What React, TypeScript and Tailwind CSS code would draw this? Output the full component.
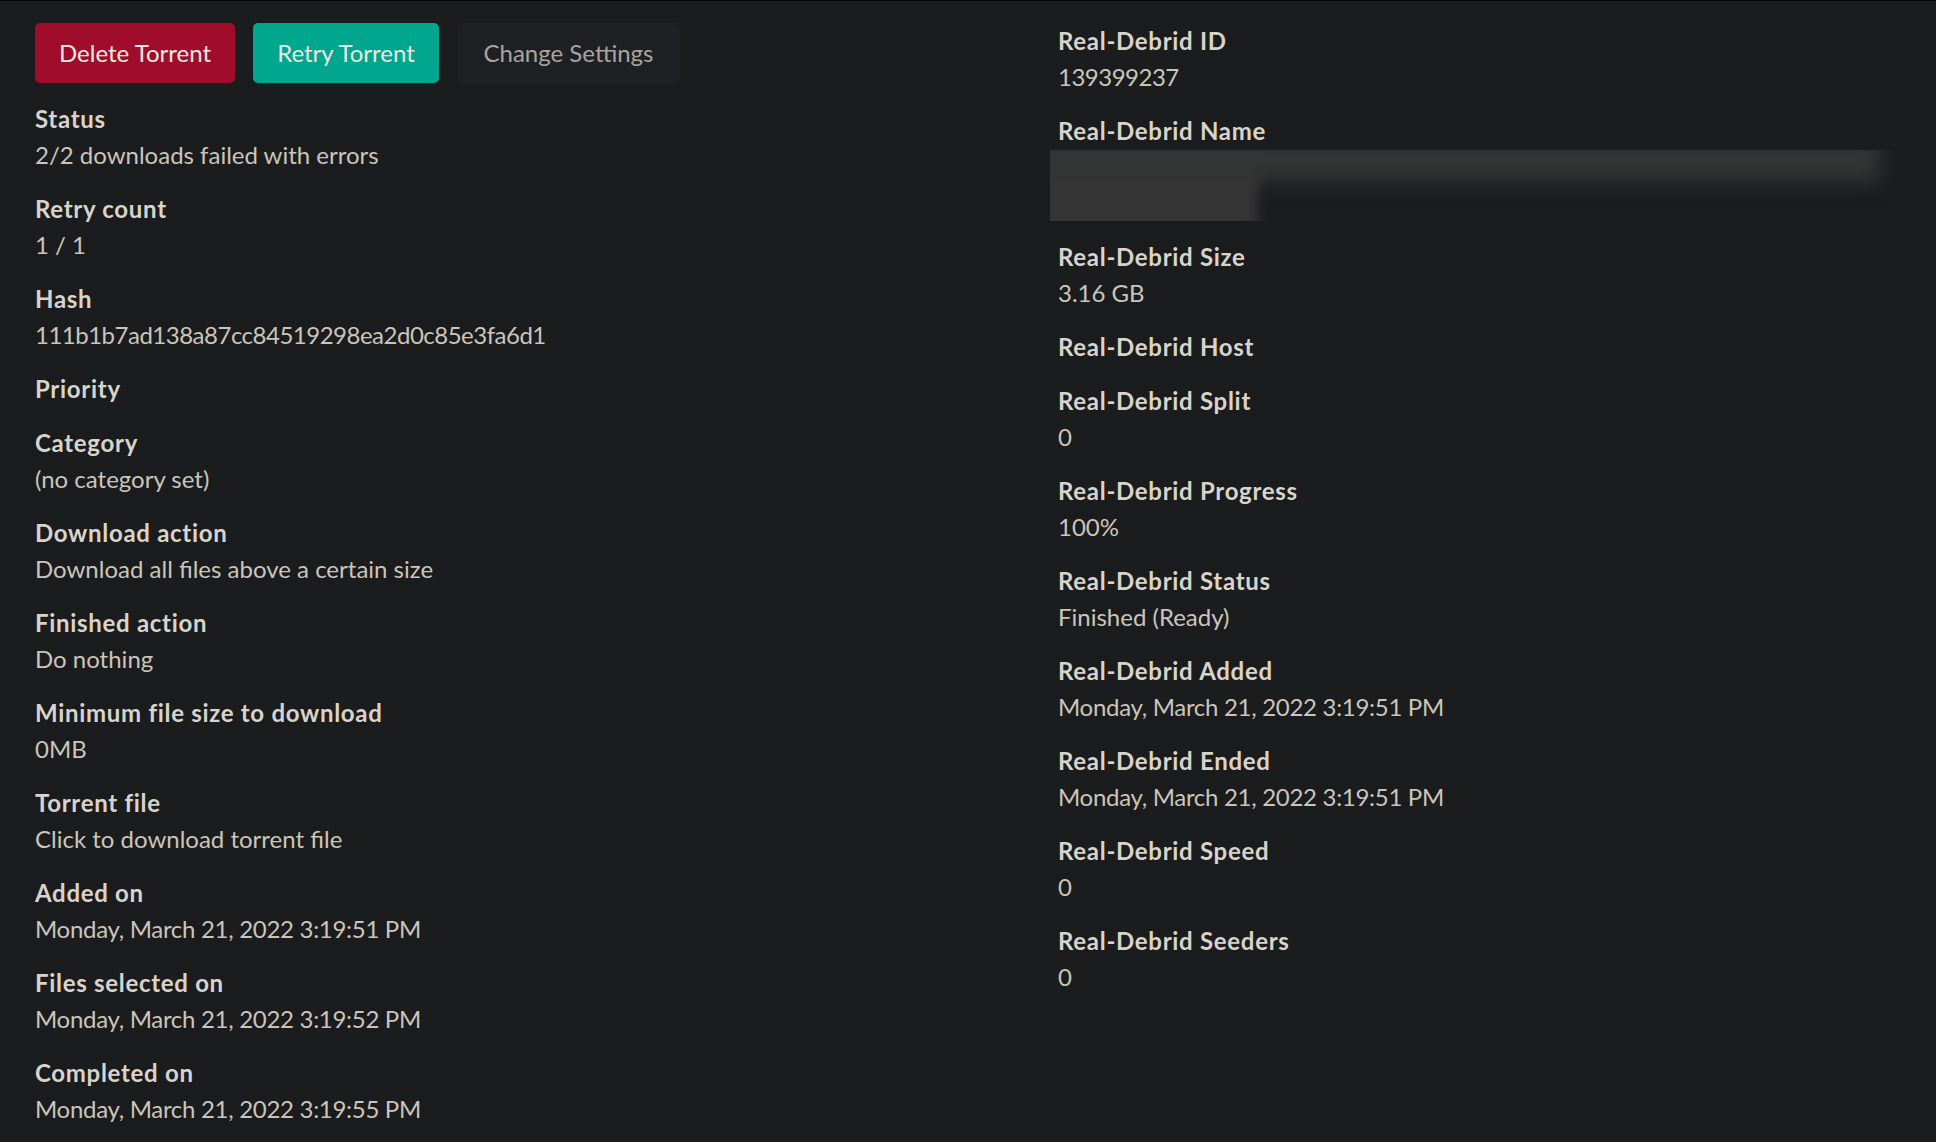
import React from "react";

type Field = { label: string; value?: string; tight?: string };

const left: Field[] = [
  { label: "Status", value: "2/2 downloads failed with errors" },
  { label: "Retry count", value: "1 / 1" },
  { label: "Hash", value: "111b1b7ad138a87cc84519298ea2d0c85e3fa6d1", tight: "tracking-[-0.5px]" },
  { label: "Priority" },
  { label: "Category", value: "(no category set)" },
  { label: "Download action", value: "Download all files above a certain size" },
  { label: "Finished action", value: "Do nothing" },
  { label: "Minimum file size to download", value: "0MB" },
  { label: "Torrent file", value: "Click to download torrent file" },
  { label: "Added on", value: "Monday, March 21, 2022 3:19:51 PM", tight: "tracking-[-0.3px]" },
  { label: "Files selected on", value: "Monday, March 21, 2022 3:19:52 PM", tight: "tracking-[-0.3px]" },
  { label: "Completed on", value: "Monday, March 21, 2022 3:19:55 PM", tight: "tracking-[-0.3px]" },
];

const rightRest: Field[] = [
  { label: "Real-Debrid Size", value: "3.16 GB" },
  { label: "Real-Debrid Host" },
  { label: "Real-Debrid Split", value: "0" },
  { label: "Real-Debrid Progress", value: "100%" },
  { label: "Real-Debrid Status", value: "Finished (Ready)" },
  { label: "Real-Debrid Added", value: "Monday, March 21, 2022 3:19:51 PM", tight: "tracking-[-0.3px]" },
  { label: "Real-Debrid Ended", value: "Monday, March 21, 2022 3:19:51 PM", tight: "tracking-[-0.3px]" },
  { label: "Real-Debrid Speed", value: "0" },
  { label: "Real-Debrid Seeders", value: "0" },
];

function FieldView({ f }: { f: Field }) {
  return (
    <div>
      <div className="font-bold tracking-[0.7px] text-[#d9d4cb]">{f.label}</div>
      {f.value !== undefined && (
        <div className={"text-[#cbc5bb] " + (f.tight ?? "")}>{f.value}</div>
      )}
    </div>
  );
}

export default function App() {
  return (
    <div
      className="min-h-screen bg-[#1b1c1e] border-t border-[#050505] text-[24px] leading-[36px]"
      style={{ fontFamily: "Lato, 'Open Sans', sans-serif" }}
    >
      <div className="flex pt-[22px]">
        <div className="w-[1058px] shrink-0 pl-[35px] flex flex-col gap-[18px] pb-[16px]">
          <div className="flex gap-[18px] h-[60px]">
            <button className="w-[200px] h-[60px] rounded-[5px] bg-[#a00d2b] text-[#ece8e2] flex items-center justify-center">
              Delete Torrent
            </button>
            <button className="w-[186px] h-[60px] rounded-[5px] bg-[#00a68d] text-[#ece8e2] flex items-center justify-center">
              Retry Torrent
            </button>
            <button className="w-[223px] h-[60px] rounded-[5px] bg-[#1f2023] text-[#aaa59e] flex items-center justify-center">
              Change Settings
            </button>
          </div>
          {left.map((f) => (
            <FieldView key={f.label} f={f} />
          ))}
        </div>
        <div className="flex-1 flex flex-col gap-[18px]">
          <FieldView f={{ label: "Real-Debrid ID", value: "139399237", tight: "tracking-[-0.5px]" }} />
          <div>
            <div className="font-bold tracking-[0.7px] text-[#d9d4cb]">Real-Debrid Name</div>
            <div className="relative h-[72px]">
              <div className="absolute left-[-8px] top-[1px] w-[843px] h-[71px] overflow-hidden bg-[#1b1c1e]">
                <div className="absolute left-[-20px] top-[-14px] w-[850px] h-[46px] bg-[#343535] blur-[10px]" />
                <div className="absolute left-[-20px] top-[20px] w-[228px] h-[64px] bg-[#353535] blur-[6px]" />
              </div>
            </div>
          </div>
          {rightRest.map((f) => (
            <FieldView key={f.label} f={f} />
          ))}
        </div>
      </div>
    </div>
  );
}
